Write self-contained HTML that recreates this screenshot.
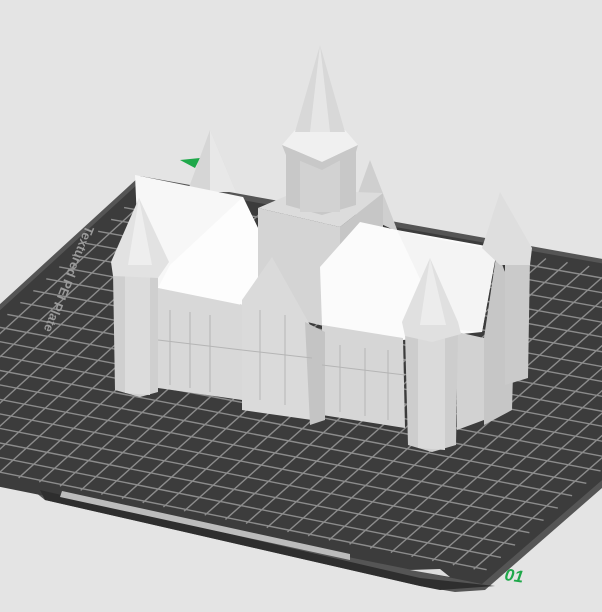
<html><body style="margin:0;width:602px;height:612px;overflow:hidden;background:#e4e4e4">
<svg width="602" height="612" viewBox="0 0 602 612" xmlns="http://www.w3.org/2000/svg">
<polygon points="140,176 820,298 485,590 455,592 420,586 45,500 30,488 -165,455" fill="#555"/>
<polygon points="140,182 810,300 482,584 -158,455" fill="#3c3c3c"/>
<g stroke="#8c8c8c" stroke-width="1.4" id="grid"></g>
<polygon points="40,490 420,578 495,586 440,590 420,586 45,500" fill="#2e2e2e"/>
<polygon points="60,497 350,560 350,554 62,491" fill="#bcbcbc"/>
<polygon points="410,570 450,577 440,569" fill="#ddd"/>
<text x="504" y="580" font-family="Liberation Sans,sans-serif" font-weight="bold" font-style="italic" font-size="17" fill="#1fa84a" transform="rotate(8 504 580)">01</text>
<text x="86" y="225" font-family="Liberation Sans,sans-serif" font-weight="bold" font-size="13" fill="#9a9a9a" transform="rotate(112 86 225)">Textured PEI Plate</text>
<polygon points="180,160 200,158 195,168" fill="#1fa84a"/>
<!-- back spires -->
<polygon points="210,130 188,190 236,192" fill="#d6d6d6"/>
<polygon points="210,130 210,192 236,192" fill="#e8e8e8"/>
<polygon points="370,160 352,210 398,232" fill="#cfcfcf"/>
<!-- left roof -->
<polygon points="135,175 140,290 160,300 240,305 272,257 243,197 140,176" fill="#f7f7f7"/>
<polygon points="243,197 170,265 158,288 242,305 272,257" fill="#fdfdfd"/>
<!-- left front wall -->
<polygon points="158,288 242,305 242,400 158,388" fill="#d8d8d8"/>
<!-- tower block -->
<polygon points="258,208 340,227 340,330 258,310" fill="#d4d4d4"/>
<polygon points="340,227 383,193 383,300 340,330" fill="#c6c6c6"/>
<polygon points="258,208 300,190 383,193 340,227" fill="#dcdcdc"/>
<!-- center tower -->
<polygon points="286,150 356,150 356,205 322,215 286,205" fill="#c8c8c8"/>
<polygon points="300,155 340,155 340,212 300,212" fill="#d2d2d2"/>
<polygon points="282,145 295,130 345,130 358,145 322,162" fill="#f0f0f0"/>
<polygon points="282,145 322,162 358,145 356,152 322,170 286,155" fill="#c8c8c8"/>
<polygon points="320,45 295,132 345,132" fill="#d8d8d8"/>
<polygon points="320,45 310,132 330,132" fill="#e6e6e6"/>
<!-- right roof -->
<polygon points="320,267 360,222 397,230 497,248 482,332 403,340 322,325" fill="#fbfbfb"/>
<polygon points="397,230 430,300 460,330 482,332 497,250 420,236" fill="#f4f4f4"/>
<!-- right front wall -->
<polygon points="322,325 403,338 405,428 322,415" fill="#d6d6d6"/>
<polygon points="457,332 484,338 484,420 457,430" fill="#d2d2d2"/>
<!-- right side gable wall -->
<polygon points="484,338 497,250 515,300 512,410 484,425" fill="#c6c6c6"/>
<!-- center gable -->
<polygon points="242,300 272,257 310,325 312,420 242,410" fill="#dadada"/>
<polygon points="305,322 325,332 325,420 310,425" fill="#c4c4c4"/>
<!-- left turret -->
<polygon points="113,272 158,272 158,392 140,397 115,390" fill="#cfcfcf"/>
<polygon points="125,275 150,275 150,395 125,393" fill="#dcdcdc"/>
<polygon points="139,198 111,262 113,276 158,278 169,262" fill="#e2e2e2"/>
<polygon points="139,198 128,265 152,265" fill="#eeeeee"/>
<!-- far right turret -->
<polygon points="505,258 530,258 528,378 505,385" fill="#cacaca"/>
<polygon points="500,192 482,248 500,265 530,265 532,248" fill="#dedede"/>
<!-- right turret -->
<polygon points="405,332 458,332 456,445 432,452 408,445" fill="#cdcdcd"/>
<polygon points="418,334 445,334 445,450 418,448" fill="#dadada"/>
<polygon points="430,258 402,322 405,336 432,342 461,334 458,322" fill="#e0e0e0"/>
<polygon points="430,258 420,325 446,325" fill="#ececec"/>
<g stroke="#b5b5b5" stroke-width="1" fill="none">
<line x1="158" y1="340" x2="242" y2="350"/><line x1="322" y1="365" x2="405" y2="375"/><line x1="242" y1="350" x2="312" y2="358"/>
<line x1="170" y1="310" x2="170" y2="385"/><line x1="190" y1="312" x2="190" y2="388"/><line x1="210" y1="315" x2="210" y2="392"/>
<line x1="340" y1="345" x2="340" y2="412"/><line x1="365" y1="348" x2="365" y2="416"/><line x1="388" y1="350" x2="388" y2="420"/>
<line x1="260" y1="310" x2="260" y2="400"/><line x1="285" y1="315" x2="285" y2="405"/>
</g>
</svg>
<script>
var g=document.getElementById('grid');
var P=[[140,182],[810,300],[482,584],[-158,455]];
function pt(u,v){var a=P[0],b=P[1],c=P[2],d=P[3];
var x=(1-u)*(1-v)*a[0]+u*(1-v)*b[0]+u*v*c[0]+(1-u)*v*d[0];
var y=(1-u)*(1-v)*a[1]+u*(1-v)*b[1]+u*v*c[1]+(1-u)*v*d[1];return [x,y];}
var s='';var NU=31,NV=23,m=0.015;
for(var i=1;i<NU;i++){var t=i/NU;var p=pt(t,m),q=pt(t,1-m*2.5);s+='<line x1="'+p[0]+'" y1="'+p[1]+'" x2="'+q[0]+'" y2="'+q[1]+'"/>';}
for(var i=1;i<NV;i++){var t=i/NV;var p=pt(m,t),q=pt(1-m,t);s+='<line x1="'+p[0]+'" y1="'+p[1]+'" x2="'+q[0]+'" y2="'+q[1]+'"/>';}
g.innerHTML=s;
</script>
</body></html>
